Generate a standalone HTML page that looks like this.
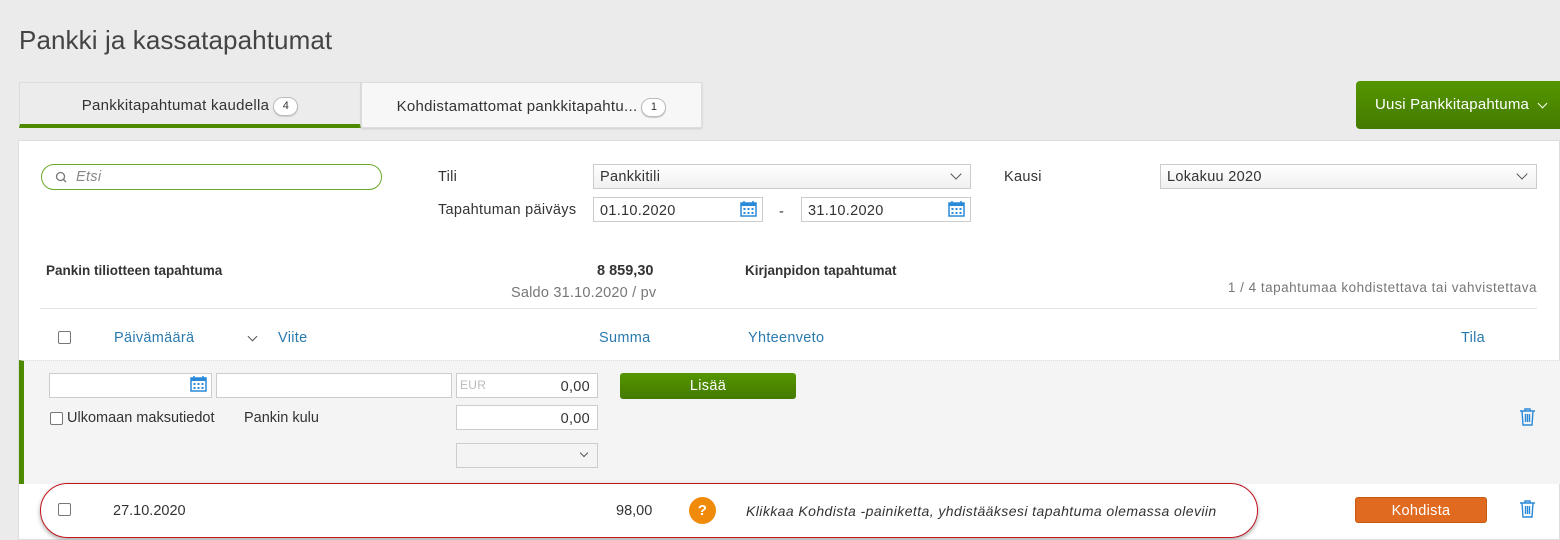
<!DOCTYPE html>
<html><head><meta charset="utf-8"><style>
*{box-sizing:border-box;margin:0;padding:0}
body{width:1560px;height:539px;background:#ebebeb;font-family:"Liberation Sans",sans-serif;font-size:14.5px;letter-spacing:.3px;color:#333;position:relative;overflow:hidden}
.a{position:absolute}
.inp{position:absolute;background:#fff;border:1px solid #ccc;height:25px;font-size:14.5px;padding:4px 6px;color:#333}
.sel{position:absolute;background:linear-gradient(#fff,#f0f0f0);border:1px solid #ccc;height:25px;padding:4px 6px;font-size:14.5px}
.chev{position:absolute;right:10px;top:5px;width:8px;height:8px;border-right:1.3px solid #555;border-bottom:1.3px solid #555;transform:rotate(45deg)}
.badge{display:inline-block;border:1px solid #bbb;border-radius:10px;background:#fff;font-size:11px;width:25px;height:19px;line-height:17px;text-align:center;margin-left:4px;box-shadow:0 1px 1px #ccc;vertical-align:middle;letter-spacing:0}
.cb{position:absolute;width:13px;height:13px;border:1px solid #777;border-radius:2px;background:#fff}
.blue{color:#2a7ab0}
.cal{position:absolute;width:17px;height:17px}
</style></head><body>
<div class="a" style="left:19px;top:25px;font-size:26px;color:#444;letter-spacing:.1px">Pankki ja kassatapahtumat</div>

<div class="a" style="left:19px;top:82px;width:342px;height:46px;background:#ececec;border:1px solid #ddd;border-bottom:4px solid #4d8a00;text-align:center;line-height:46px;font-size:15px">Pankkitapahtumat kaudella<span class="badge">4</span></div>
<div class="a" style="left:361px;top:82px;width:341px;height:46px;background:#f7f7f7;border:1px solid #ddd;text-align:center;line-height:48px;font-size:15px;box-shadow:0 1px 2px #ccc">Kohdistamattomat pankkitapahtu...<span class="badge">1</span></div>

<div class="a" style="left:1356px;top:81px;width:204px;height:48px;background:linear-gradient(#559600,#447a00);border-radius:4px 0 0 4px;color:#fff;font-size:15px;line-height:48px;padding-left:19px;letter-spacing:.2px">Uusi Pankkitapahtuma<span style="position:absolute;left:183px;top:19px;width:7px;height:7px;border-right:1.3px solid #fff;border-bottom:1.3px solid #fff;transform:rotate(45deg)"></span></div>

<div class="a" style="left:18px;top:140px;width:1542px;height:400px;background:#fff;border:1px solid #ddd"></div>

<div class="a" style="left:41px;top:164px;width:341px;height:26px;border:1px solid #6aa82a;border-radius:13px;background:#fff"><svg class="a" style="left:13px;top:6px" width="13" height="13" viewBox="0 0 13 13"><circle cx="5.5" cy="5.5" r="4" fill="none" stroke="#777" stroke-width="1.3"/><path d="M8.5 8.5L11 11" stroke="#777" stroke-width="1.3"/></svg><span class="a" style="left:34px;top:4px;font-style:italic;color:#888">Etsi</span></div>

<div class="a" style="left:438px;top:169px">Tili</div>
<div class="a" style="left:438px;top:202px">Tapahtuman päiväys</div>
<div class="sel" style="left:593px;top:164px;width:378px">Pankkitili<span class="chev"></span></div>
<div class="inp" style="left:593px;top:197px;width:170px;padding-top:5px">01.10.2020</div>
<div class="a" style="left:779px;top:204px">-</div>
<div class="inp" style="left:801px;top:197px;width:170px;padding-top:5px">31.10.2020</div>
<div class="a" style="left:1004px;top:169px">Kausi</div>
<div class="sel" style="left:1160px;top:164px;width:377px">Lokakuu 2020<span class="chev"></span></div>

<svg class="cal" style="left:740px;top:200px" viewBox="0 0 17 17"><rect x="1" y="3" width="15" height="13" fill="#fff" stroke="#2a8ad8" stroke-width="1.5"/><rect x="1" y="3" width="15" height="3" fill="#2a8ad8"/><path d="M4 1v4M13 1v4" stroke="#2a8ad8" stroke-width="1.5"/><g fill="#2a8ad8"><rect x="3.5" y="8" width="2" height="2"/><rect x="7.5" y="8" width="2" height="2"/><rect x="11.5" y="8" width="2" height="2"/><rect x="3.5" y="12" width="2" height="2"/><rect x="7.5" y="12" width="2" height="2"/><rect x="11.5" y="12" width="2" height="2"/></g></svg>
<svg class="cal" style="left:948px;top:200px" viewBox="0 0 17 17"><rect x="1" y="3" width="15" height="13" fill="#fff" stroke="#2a8ad8" stroke-width="1.5"/><rect x="1" y="3" width="15" height="3" fill="#2a8ad8"/><path d="M4 1v4M13 1v4" stroke="#2a8ad8" stroke-width="1.5"/><g fill="#2a8ad8"><rect x="3.5" y="8" width="2" height="2"/><rect x="7.5" y="8" width="2" height="2"/><rect x="11.5" y="8" width="2" height="2"/><rect x="3.5" y="12" width="2" height="2"/><rect x="7.5" y="12" width="2" height="2"/><rect x="11.5" y="12" width="2" height="2"/></g></svg>

<div class="a" style="left:46px;top:263px;font-weight:bold;font-size:13.5px;letter-spacing:0">Pankin tiliotteen tapahtuma</div>
<div class="a" style="left:597px;top:263px;font-weight:bold;font-size:14.5px;letter-spacing:0">8 859,30</div>
<div class="a" style="left:511px;top:285px;color:#777;letter-spacing:.2px">Saldo 31.10.2020 / pv</div>
<div class="a" style="left:745px;top:263px;font-weight:bold;font-size:13.5px;letter-spacing:0">Kirjanpidon tapahtumat</div>
<div class="a" style="right:23px;top:280px;color:#777;font-size:13.5px;letter-spacing:.5px">1 / 4 tapahtumaa kohdistettava tai vahvistettava</div>
<div class="a" style="left:40px;top:308px;width:1497px;border-top:1px solid #e3e3e3"></div>

<div class="cb" style="left:58px;top:331px"></div>
<div class="a blue" style="left:114px;top:330px">Päivämäärä</div>
<div class="a" style="left:249px;top:333px;width:7px;height:7px;border-right:1.3px solid #555;border-bottom:1.3px solid #555;transform:rotate(45deg)"></div>
<div class="a blue" style="left:278px;top:330px">Viite</div>
<div class="a blue" style="left:599px;top:330px">Summa</div>
<div class="a blue" style="left:748px;top:330px">Yhteenveto</div>
<div class="a blue" style="left:1461px;top:330px">Tila</div>

<div class="a" style="left:19px;top:360px;width:1541px;height:124px;background:#f4f4f4;border-left:5px solid #4d8a00;border-top:1px dotted #ddd"></div>
<div class="inp" style="left:49px;top:373px;width:163px"></div>
<svg class="cal" style="left:190px;top:375px" viewBox="0 0 17 17"><rect x="1" y="3" width="15" height="13" fill="#fff" stroke="#2a8ad8" stroke-width="1.5"/><rect x="1" y="3" width="15" height="3" fill="#2a8ad8"/><path d="M4 1v4M13 1v4" stroke="#2a8ad8" stroke-width="1.5"/><g fill="#2a8ad8"><rect x="3.5" y="8" width="2" height="2"/><rect x="7.5" y="8" width="2" height="2"/><rect x="11.5" y="8" width="2" height="2"/><rect x="3.5" y="12" width="2" height="2"/><rect x="7.5" y="12" width="2" height="2"/><rect x="11.5" y="12" width="2" height="2"/></g></svg>
<div class="inp" style="left:216px;top:373px;width:236px"></div>
<div class="inp" style="left:456px;top:373px;width:142px;text-align:right;padding-right:7px;padding-top:5px">0,00<span class="a" style="left:3px;top:4px;color:#bbb;font-size:12px">EUR</span></div>
<div class="a" style="left:620px;top:373px;width:176px;height:26px;background:linear-gradient(#559600,#447a00);border-radius:3px;color:#fff;text-align:center;line-height:26px">Lisää</div>
<div class="cb" style="left:50px;top:412px"></div>
<div class="a" style="left:67px;top:410px;letter-spacing:0">Ulkomaan maksutiedot</div>
<div class="a" style="left:244px;top:410px;letter-spacing:0">Pankin kulu</div>
<div class="inp" style="left:456px;top:405px;width:142px;text-align:right;padding-right:7px;padding-top:5px">0,00</div>
<div class="sel" style="left:456px;top:443px;width:142px;background:#f4f4f4"><span class="chev" style="top:6px;width:6px;height:6px"></span></div>
<svg class="a" style="left:1519px;top:408px" width="17" height="18" viewBox="0 0 17 18"><path d="M1 3h15M6 3V1h5v2M3 3l1 14h9l1-14M6.5 6v8M8.5 6v8M10.5 6v8" fill="none" stroke="#2a8ad8" stroke-width="1.4"/></svg>

<div class="a" style="left:40px;top:483px;width:1218px;height:55px;border:1.5px solid #c0141c;border-radius:28px;box-shadow:0 2px 4px #aaa"></div>
<div class="cb" style="left:58px;top:503px"></div>
<div class="a" style="left:113px;top:503px;letter-spacing:0">27.10.2020</div>
<div class="a" style="left:616px;top:503px;letter-spacing:0">98,00</div>
<div class="a" style="left:689px;top:497px;width:27px;height:27px;border-radius:50%;background:#ef8a0a;color:#fff;font-weight:bold;text-align:center;line-height:27px;font-size:15px">?</div>
<div class="a" style="left:746px;top:503px;font-style:italic;font-size:14px;letter-spacing:.42px">Klikkaa Kohdista -painiketta, yhdistääksesi tapahtuma olemassa oleviin</div>
<div class="a" style="left:1355px;top:497px;width:132px;height:26px;background:#e06a20;border-radius:3px;color:#fff;text-align:center;line-height:26px;border:1px solid #c55a10">Kohdista</div>
<svg class="a" style="left:1519px;top:500px" width="17" height="18" viewBox="0 0 17 18"><path d="M1 3h15M6 3V1h5v2M3 3l1 14h9l1-14M6.5 6v8M8.5 6v8M10.5 6v8" fill="none" stroke="#2a8ad8" stroke-width="1.4"/></svg>
</body></html>
